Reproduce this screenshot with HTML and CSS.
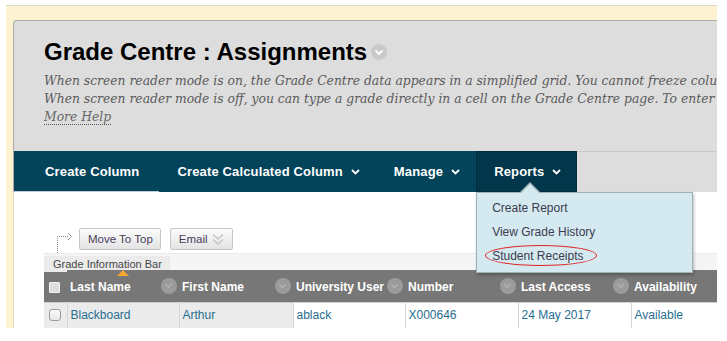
FILE: index.html
```html
<!DOCTYPE html>
<html lang="en">
<head>
<meta charset="utf-8">
<title>Grade Centre : Assignments</title>
<link rel="stylesheet" href="styles.css">
</head>
<body>
<div class="frame">
  <div class="panel">
    <div class="intro">
      <h1 class="title">Grade Centre : Assignments<span class="title-menu"><svg width="16" height="16" viewBox="0 0 16 16"><circle cx="8" cy="8" r="8" fill="#c9c9c9"/><polyline points="4.5,6.5 8,10 11.5,6.5" fill="none" stroke="#fff" stroke-width="1.8"/></svg></span></h1>
      <p class="help">When screen reader mode is on, the Grade Centre data appears in a simplified grid. You cannot freeze columns in this mode.<br>When screen reader mode is off, you can type a grade directly in a cell on the Grade Centre page. To enter a grade, click a cell.<br><span class="more">More Help</span></p>
    </div>
    <div class="navrow">
      <ul class="nav">
        <li class="nav-item first">Create Column</li>
        <li class="nav-item">Create Calculated Column<svg class="chev" width="9" height="6" viewBox="0 0 9 6"><polyline points="1,1 4.5,4.5 8,1" fill="none" stroke="#fff" stroke-width="1.8"/></svg></li>
        <li class="nav-item">Manage<svg class="chev" width="9" height="6" viewBox="0 0 9 6"><polyline points="1,1 4.5,4.5 8,1" fill="none" stroke="#fff" stroke-width="1.8"/></svg></li>
        <li class="nav-item open">Reports<svg class="chev" width="9" height="6" viewBox="0 0 9 6"><polyline points="1,1 4.5,4.5 8,1" fill="none" stroke="#fff" stroke-width="1.8"/></svg>
          <ul class="menu">
            <li class="menu-item">Create Report</li>
            <li class="menu-item">View Grade History</li>
            <li class="menu-item"><span class="circled">Student Receipts</span></li>
          </ul>
        </li>
      </ul>
      <div class="nav-fill"></div>
    </div>
  </div>
  <div class="content">
    <div class="toolbar">
      <svg class="jump" width="17" height="21" viewBox="0 0 17 21"><path d="M1.5 21 V4.5 H13" fill="none" stroke="#8a8a8a" stroke-width="1" stroke-dasharray="1 1"/><polyline points="12,1 15.5,4.5 12,8" fill="none" stroke="#9a9a9a" stroke-width="1"/></svg>
      <span class="btn">Move To Top</span>
      <span class="btn">Email<svg class="dbl" width="14" height="14" viewBox="0 0 14 14"><polyline points="2,2.5 7,7 12,2.5" fill="none" stroke="#c4c4c4" stroke-width="1.6"/><polyline points="2,7.5 7,12 12,7.5" fill="none" stroke="#c4c4c4" stroke-width="1.6"/></svg></span>
    </div>
    <div class="infobar"><span class="infotab">Grade Information Bar</span></div>
    <table class="grid">
      <colgroup>
        <col class="c-check"><col class="c-last"><col class="c-first"><col class="c-mid"><col class="c-std"><col class="c-std"><col class="c-std">
      </colgroup>
      <thead>
        <tr>
          <th><span class="hcheck"></span></th>
          <th class="sorted"><div class="th-in"><span class="label">Last Name</span><span class="hmenu"></span></div></th>
          <th><div class="th-in"><span class="label">First Name</span><span class="hmenu"></span></div></th>
          <th><div class="th-in"><span class="label">University User</span><span class="hmenu"></span></div></th>
          <th><div class="th-in"><span class="label">Number</span><span class="hmenu"></span></div></th>
          <th><div class="th-in"><span class="label">Last Access</span><span class="hmenu"></span></div></th>
          <th><div class="th-in"><span class="label">Availability</span><span class="hmenu"></span></div></th>
        </tr>
      </thead>
      <tbody>
        <tr>
          <td class="frozen"><span class="rcheck"></span></td>
          <td class="frozen">Blackboard</td>
          <td class="frozen">Arthur</td>
          <td>ablack</td>
          <td>X000646</td>
          <td>24 May 2017</td>
          <td>Available</td>
        </tr>
      </tbody>
    </table>
  </div>
</div>
</body>
</html>
```
FILE: styles.css
```css
* { box-sizing: border-box; }

body {
  margin: 0;
  background: #fff;
  font-family: "Liberation Sans", Arial, sans-serif;
}

.frame {
  margin: 5px 0 0 6px;
  width: 711px;
  height: 323px;
  overflow: hidden;
  background: #fdf2d2;
  border-top: 1px solid #ddd6c2;
  padding: 14px 0 0 7px;
  display: flex;
  flex-direction: column;
}

.panel {
  background: #dddddd;
  border-top: 1px solid #a9a9a9;
  border-left: 1px solid #a9a9a9;
  border-top-left-radius: 4px;
  position: relative;
  z-index: 2;
}

.intro {
  height: 130px;
  padding: 17px 0 0 30px;
  overflow: hidden;
}

.title {
  margin: 0;
  font-size: 24px;
  line-height: 28px;
  font-weight: bold;
  color: #000;
  display: flex;
  align-items: center;
  white-space: nowrap;
}

.title-menu {
  display: flex;
  margin-left: 4px;
}

.help {
  margin: 6px 0 0;
  font-family: "DejaVu Serif", serif;
  font-style: italic;
  font-size: 12.35px;
  line-height: 18px;
  color: #5a5a5a;
  white-space: nowrap;
}

.more {
  color: #666;
  border-bottom: 1px dotted #555;
}

.navrow {
  display: flex;
  height: 41px;
}

.nav {
  display: flex;
  margin: 0;
  padding: 0;
  list-style: none;
  background: #03445a;
}

.nav-item {
  display: flex;
  align-items: center;
  gap: 8px;
  padding: 0 16px 0 18px;
  color: #fff;
  font-size: 13px;
  font-weight: bold;
  letter-spacing: 0.15px;
  white-space: nowrap;
}

.nav-item.first {
  padding: 0 20px 0 31px;
  box-shadow: inset 0 -1px 0 #c3cfd6;
}

.nav-item.open {
  position: relative;
  background: #01364b;
  box-shadow: inset 0 0 0 1px #012a3a;
}

.chev { display: block; }

.nav-fill {
  flex: 1;
  border-top: 1px solid #c8c8c8;
}

.menu {
  position: absolute;
  left: 0;
  top: 100%;
  width: 217px;
  margin: 0;
  padding: 3px 0 4px;
  list-style: none;
  background: #d4eaf0;
  border: 1px solid #9fb0b6;
  box-shadow: 1px 2px 3px rgba(0, 0, 0, 0.25);
  z-index: 10;
  letter-spacing: 0;
}

.menu::before,
.menu::after {
  content: "";
  position: absolute;
  width: 0;
  height: 0;
  border-style: solid;
  border-color: transparent;
}

.menu::before {
  left: 43px;
  top: -11px;
  border-width: 0 10px 10px;
  border-bottom-color: #9fb0b6;
}

.menu::after {
  left: 44px;
  top: -9px;
  border-width: 0 9px 9px;
  border-bottom-color: #d4eaf0;
}

.menu-item {
  padding-left: 15px;
  line-height: 24px;
  height: 24px;
  font-size: 12px;
  font-weight: normal;
  color: #3d3b4f;
}

.circled {
  position: relative;
}

.circled::after {
  content: "";
  position: absolute;
  left: -7px;
  right: -13px;
  top: -4px;
  bottom: -3px;
  border: 1px solid #e2262a;
  border-radius: 50%;
}

.content {
  flex: 1;
  background: #fff;
  border-left: 1px solid #e3d8b3;
  padding: 36px 0 0 30px;
}

.toolbar {
  display: flex;
  align-items: flex-start;
  padding-left: 12px;
  height: 25px;
}

.jump {
  display: block;
  margin-top: 4px;
  margin-right: 6px;
}

.btn {
  display: flex;
  align-items: center;
  gap: 3px;
  height: 22px;
  padding: 0 7px 0 8px;
  margin-right: 9px;
  border: 1px solid #c6c6c6;
  border-radius: 2px;
  background: linear-gradient(#fbfbfb, #e4e4e4);
  font-size: 11.5px;
  color: #463d5a;
  white-space: nowrap;
}

.dbl { display: block; }

.infobar {
  height: 17px;
  background: #f5f5f5;
  border-top: 1px solid #ebebeb;
}

.infotab {
  display: inline-block;
  height: 16px;
  line-height: 16px;
  padding: 0 8px 0 9px;
  background: #ebebeb;
  font-size: 11px;
  color: #464646;
}

.grid {
  table-layout: fixed;
  border-collapse: collapse;
  width: 700px;
}

.c-check { width: 23px; }
.c-last { width: 112px; }
.c-first { width: 114px; }
.c-mid { width: 112px; }
.c-std { width: 113px; }

.grid th {
  height: 32px;
  padding: 0;
  background: #777;
  color: #fff;
  font-size: 12px;
  font-weight: bold;
  text-align: left;
  vertical-align: middle;
}

.grid th.sorted {
  position: relative;
}

.grid th.sorted::before {
  content: "";
  position: absolute;
  left: 50%;
  top: 0;
  margin-left: -6px;
  border-style: solid;
  border-width: 0 6px 6px;
  border-color: transparent transparent #f3a934;
}

.th-in {
  display: flex;
  align-items: center;
  padding-left: 3px;
}

.th-in .label {
  flex: 1;
  overflow: hidden;
  white-space: nowrap;
  padding-top: 3px;
}

.hmenu {
  flex: none;
  width: 16px;
  height: 16px;
  margin-right: 2px;
  border-radius: 50%;
  background: #9b9b9b;
  position: relative;
}

.hmenu::after {
  content: "";
  position: absolute;
  left: 5px;
  top: 4px;
  width: 4px;
  height: 4px;
  border-right: 1.5px solid #b9b9b9;
  border-bottom: 1.5px solid #b9b9b9;
  transform: rotate(45deg);
}

.hcheck {
  display: block;
  width: 11px;
  height: 11px;
  margin: 3px 0 0 5px;
  background: #dedede;
  border: 1px solid #f2f2f2;
  border-radius: 1px;
}

.grid td {
  height: 26px;
  padding: 0 0 0 3px;
  border-top: 1px solid #cfcfcf;
  border-right: 1px solid #d6d6d6;
  font-size: 12px;
  color: #276e8e;
  white-space: nowrap;
  overflow: hidden;
}

.grid td.frozen {
  background: #ebebeb;
}

.rcheck {
  display: block;
  width: 12px;
  height: 12px;
  margin-left: 2px;
  border: 1px solid #9c9c9c;
  border-radius: 3px;
  background: linear-gradient(#fdfdfd, #e6e6e6);
}
```
